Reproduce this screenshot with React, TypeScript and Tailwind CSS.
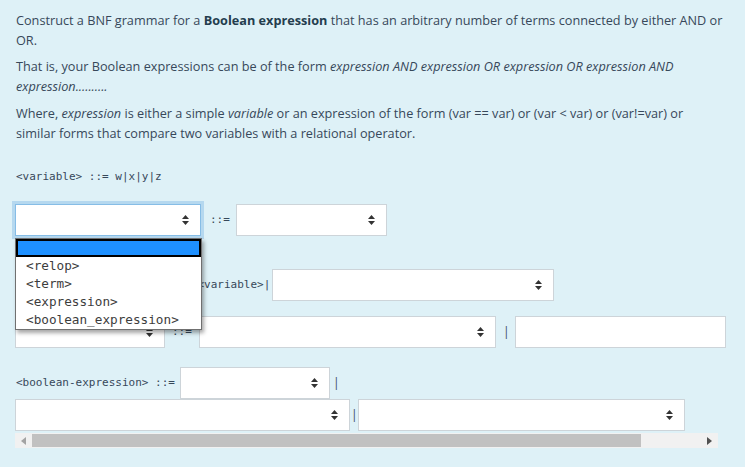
import React from "react";

const mono = { fontFamily: '"DejaVu Sans Mono", "Liberation Mono", monospace' };

function Arrow() {
  return (
    <svg width="7" height="10" viewBox="0 0 7 10" className="shrink-0">
      <polygon points="3.5,0 7,4 0,4" fill="#333" />
      <polygon points="0,6 7,6 3.5,10" fill="#333" />
    </svg>
  );
}

function Sel({ w, focused = false, children }: { w: string; focused?: boolean; children?: React.ReactNode }) {
  return (
    <div
      className={`relative ${w} h-[32px] shrink-0 bg-white flex items-center justify-end pr-[11px] border ${
        focused ? "border-[#86bde6] ring-[3px] ring-[#b5d8ef]" : "border-[#cdd4d9]"
      }`}
    >
      <Arrow />
      {children}
    </div>
  );
}

function SelPlain({ w }: { w: string }) {
  return <div className={`${w} h-[32px] shrink-0 bg-white border border-[#cdd4d9]`} />;
}

export default function App() {
  return (
    <div className="w-[748px] h-[467px] bg-white flex overflow-hidden">
      <div
        className="w-[745px] h-[467px] bg-[#def1f7] pl-[15px] pr-[15px] pt-[10px] text-[#37485a]"
        style={{ fontFamily: '"Open Sans", "Noto Sans", sans-serif' }}
      >
        <p className="w-[709px] text-[12.7px] leading-[20px] pl-[1px]">
          Construct a BNF grammar for a <b className="font-bold text-[#243d4e]">Boolean expression</b> that has an arbitrary
          number of terms connected by either AND or OR.
        </p>
        <p className="w-[709px] text-[12.7px] leading-[20px] mt-[6px] pl-[1px]">
          That is, your Boolean expressions can be of the form{" "}
          <i>expression AND expression OR expression OR expression AND expression..........</i>
        </p>
        <p className="w-[709px] text-[12.7px] leading-[20px] mt-[7px] pl-[1px]">
          Where, <i>expression</i> is either a simple <i>variable</i> or an expression of the form (var == var) or (var &lt;
          var) or (var!=var) or similar forms that compare two variables with a relational operator.
        </p>

        <div className="text-[11px] leading-[16px] mt-[26px] pl-[1px]" style={mono}>
          &lt;variable&gt; ::= w|x|y|z
        </div>

        {/* Row 1 */}
        <div className="flex items-center mt-[19px] relative z-10">
          <Sel w="w-[186px]" focused>
            <div
              className="absolute left-[-1px] top-[33px] w-[187px] bg-white border border-[#707070] shadow-[2px_3px_4px_rgba(0,0,0,0.35)] text-[12.7px] text-[#3d3d3d]"
              style={mono}
            >
              <div className="h-[18px] bg-[#1e90ff] border-2 border-black" />
              <div className="h-[18px] leading-[18px] pl-[10px]">&lt;relop&gt;</div>
              <div className="h-[18px] leading-[18px] pl-[10px]">&lt;term&gt;</div>
              <div className="h-[18px] leading-[18px] pl-[10px]">&lt;expression&gt;</div>
              <div className="h-[18px] leading-[18px] pl-[10px]">&lt;boolean_expression&gt;</div>
            </div>
          </Sel>
          <span className="text-[11px] ml-[9px] mr-[6px]" style={mono}>
            ::=
          </span>
          <Sel w="w-[151px]" />
        </div>

        {/* Row 2 */}
        <div className="flex items-center mt-[33px]">
          <Sel w="w-[150px]" />
          <span className="text-[11px] ml-[6px] whitespace-pre" style={mono}>
            ::= &lt;variable&gt;|
          </span>
          <span className="ml-[2px]" />
          <Sel w="w-[282px]" />
        </div>

        {/* Row 3 */}
        <div className="flex items-center mt-[15px]">
          <Sel w="w-[150px]" />
          <span className="text-[11px] ml-[7px] mr-[7px]" style={mono}>
            ::=
          </span>
          <Sel w="w-[297px]" />
          <span className="text-[12px] ml-[7px] mr-[6px]">|</span>
          <SelPlain w="w-[211px]" />
        </div>

        {/* Row 4 */}
        <div className="flex items-center mt-[19px]">
          <span className="text-[11px] pl-[1px] mr-[5px]" style={mono}>
            &lt;boolean-expression&gt; ::=
          </span>
          <Sel w="w-[150px]" />
          <span className="text-[12px] ml-[3px]">|</span>
        </div>

        {/* Row 5 */}
        <div className="flex items-center">
          <Sel w="w-[335px]" />
          <span className="text-[12px] ml-[1px] mr-0">|</span>
          <Sel w="w-[327px]" />
        </div>

        {/* Scrollbar */}
        <div className="w-[703px] h-[15px] mt-[2px] bg-[#f1f1f1] flex items-center">
          <div className="w-[17px] h-[15px] flex items-center justify-center">
            <svg width="5" height="8" viewBox="0 0 5 8">
              <polygon points="5,0 5,8 0,4" fill="#a3a3a3" />
            </svg>
          </div>
          <div className="w-[609px] h-[13px] bg-[#c1c1c1]" />
          <div className="flex-1" />
          <div className="w-[17px] h-[15px] flex items-center justify-center">
            <svg width="5" height="8" viewBox="0 0 5 8">
              <polygon points="0,0 5,4 0,8" fill="#505050" />
            </svg>
          </div>
        </div>
      </div>
    </div>
  );
}
